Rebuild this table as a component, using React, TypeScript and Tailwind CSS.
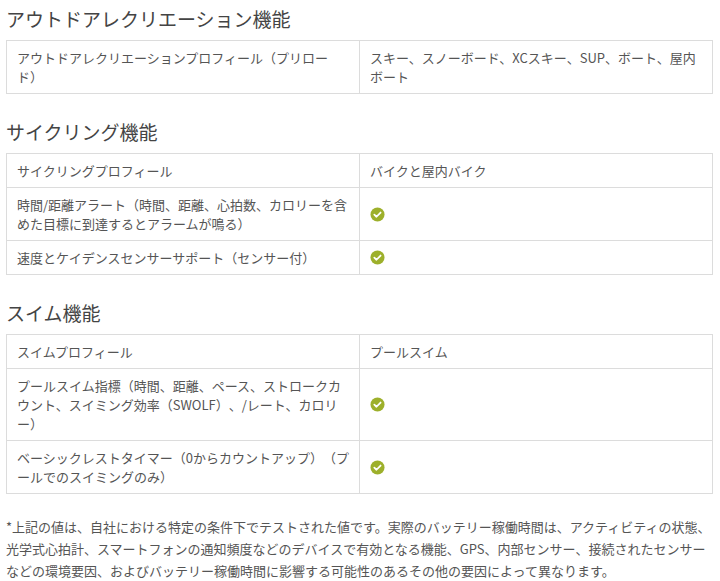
import React from 'react';

const font = '[font-family:"Noto_Sans_CJK_JP","Noto_Sans",sans-serif] [text-spacing-trim:space-all]';

type Row = { label: string; value: string | null };

const sections: { title: string; rows: Row[] }[] = [
  {
    title: 'アウトドアレクリエーション機能',
    rows: [
      {
        label: 'アウトドアレクリエーションプロフィール（プリロード）',
        value: 'スキー、スノーボード、XCスキー、SUP、ボート、屋内ボート',
      },
    ],
  },
  {
    title: 'サイクリング機能',
    rows: [
      { label: 'サイクリングプロフィール', value: 'バイクと屋内バイク' },
      {
        label: '時間/距離アラート（時間、距離、心拍数、カロリーを含めた目標に到達するとアラームが鳴る）',
        value: null,
      },
      { label: '速度とケイデンスセンサーサポート（センサー付）', value: null },
    ],
  },
  {
    title: 'スイム機能',
    rows: [
      { label: 'スイムプロフィール', value: 'プールスイム' },
      {
        label: 'プールスイム指標（時間、距離、ペース、ストロークカウント、スイミング効率（SWOLF）、/レート、カロリー）',
        value: null,
      },
      { label: 'ベーシックレストタイマー（0からカウントアップ）（プールでのスイミングのみ）', value: null },
    ],
  },
];

const Check: React.FC = () => (
  <svg width="15" height="15" viewBox="0 0 16 16" className="block">
    <circle cx="8" cy="8" r="7.5" fill="#9db02b" />
    <path d="M4.6 8.2l2.3 2.2 4.4-4.5" fill="none" stroke="#fff" strokeWidth="1.9" strokeLinecap="round" strokeLinejoin="round" />
  </svg>
);

const App: React.FC = () => {
  return (
    <div className={`w-[720px] bg-white pl-[6px] pr-[7px] pt-[5px] pb-4 text-[#555] ${font}`}>
      {sections.map((section, i) => (
        <section key={i} className={i > 0 ? 'mt-[24px]' : ''}>
          <h2 className="text-[19px] leading-[28px] font-normal text-[#444] mb-[7px]">{section.title}</h2>
          <table className="w-full table-fixed border-collapse text-[13px] leading-[19px]">
            <tbody>
              {section.rows.map((row, j) => (
                <tr key={j}>
                  <td className="w-1/2 border border-[#dcdcdc] px-[10px] py-[7px] align-middle">{row.label}</td>
                  <td className="w-1/2 border border-[#dcdcdc] px-[10px] py-[7px] align-middle">
                    {row.value ?? <Check />}
                  </td>
                </tr>
              ))}
            </tbody>
          </table>
        </section>
      ))}
      <p className="mt-[22px] text-[13px] leading-[22px] text-[#555]">
        *上記の値は、自社における特定の条件下でテストされた値です。実際のバッテリー稼働時間は、アクティビティの状態、光学式心拍計、スマートフォンの通知頻度などのデバイスで有効となる機能、GPS、内部センサー、接続されたセンサーなどの環境要因、およびバッテリー稼働時間に影響する可能性のあるその他の要因によって異なります。
      </p>
    </div>
  );
};

export default App;
